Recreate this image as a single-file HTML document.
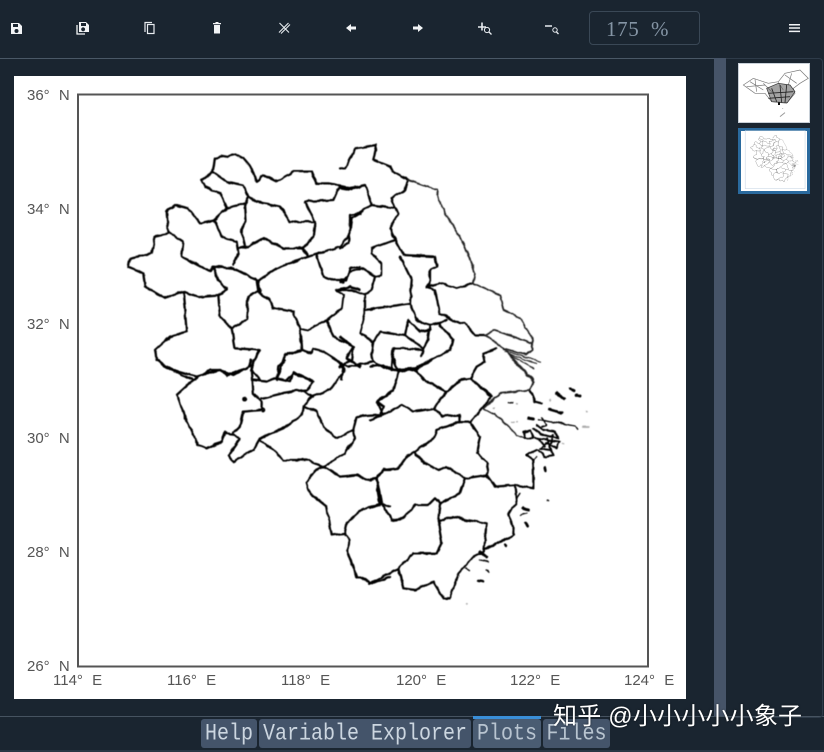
<!DOCTYPE html>
<html><head><meta charset="utf-8"><style>
html,body{margin:0;padding:0;background:#1a2530;}
#r{position:relative;width:824px;height:752px;overflow:hidden;background:#1a2530;}
.a{position:absolute;}
.tab{position:absolute;top:719px;height:29px;background:#44546a;border-radius:3px;color:#ccd6e0;font:20px/32px "Liberation Mono",monospace;text-align:center;white-space:pre;}
.tab span{display:inline-block;transform:scaleY(1.15);}
</style></head><body><div id="r">
<div class="a" style="left:0;top:58px;width:714px;height:1px;background:#4a5866"></div>
<div class="a" style="left:0;top:716px;width:824px;height:1px;background:#465360"></div>
<div class="a" style="left:0;top:750px;width:824px;height:2px;background:#2a3644"></div>
<div class="a" style="left:714px;top:58px;width:12px;height:658px;background:#465468"></div>
<div class="a" style="left:726px;top:58px;width:96px;height:658px;border:1px solid #2e3b49;border-left:0;border-radius:0 4px 4px 0"></div>
<div class="a" style="left:14px;top:76px;width:672px;height:623px;background:#fff"></div>
<svg class="a" style="left:0;top:0" width="824" height="58" fill="#f2f4f6" stroke="none">
<path d="M11 23h8l3 3v8h-11zM13 24v3h5v-3zM16.500 29a2 2 0 100 4 2 2 0 000-4z" fill-rule="evenodd"/>
<path d="M79 22h7l3 3v7h-10zM81 23v3h5v-3zM84 27.500a2 2 0 100 3.600 2 2 0 000-3.600z" fill-rule="evenodd"/>
<path d="M77 25v9h8" fill="none" stroke="#f2f4f6" stroke-width="1.300"/>
<g fill="none" stroke="#e8ecf0" stroke-width="1.200"><path d="M145 32v-9.500h7"/><rect x="147.500" y="24.500" width="6.500" height="9"/></g>
<path d="M214 25h6v8.500h-6zM213 23h8v1.300h-8zM215.500 22h3v1h-3z"/>
<g fill="none" stroke="#e8ecf0" stroke-width="1.100"><path d="M279.500 23l9.500 9.500M279 32.500l9.500-9.500M281 33.500l9-9"/></g>
<path d="M346 28l5-4v2.500h5v3h-5v2.500z"/>
<path d="M423 28l-5-4v2.500h-5v3h5v2.500z"/>
<g fill="none" stroke="#e8ecf0"><path d="M478 27h8M482 22.500v8" stroke-width="1.600"/><circle cx="487" cy="30" r="2.600" stroke-width="1"/><path d="M489 32l2.500 2.500" stroke-width="1.300"/></g>
<g fill="none" stroke="#e8ecf0"><path d="M545 26h7" stroke-width="1.500"/><circle cx="555" cy="30" r="2.200" stroke-width="1"/><path d="M556.500 32l2 2" stroke-width="1.300"/></g>
<path d="M789 24h11v1.500h-11zM789 27.300h11v1.500h-11zM789 30.600h11v1.500h-11z"/>
</svg>
<div class="a" style="left:589px;top:11px;width:109px;height:32px;border:1px solid #3a4856;border-radius:4px"></div>
<div class="a" style="left:606px;top:13px;color:#8595a5;font:21px/32px 'Liberation Serif',serif;letter-spacing:.6px;white-space:pre">175  %</div>

<svg class="a" style="left:0;top:0" width="824" height="752" fill="none">
<defs>
<filter id="j" x="-5%" y="-5%" width="110%" height="110%"><feTurbulence type="fractalNoise" baseFrequency="0.16" numOctaves="1" seed="4"/><feDisplacementMap in="SourceGraphic" scale="3.500" xChannelSelector="R" yChannelSelector="G"/><feGaussianBlur stdDeviation="0.4"/></filter>
<filter id="s"><feGaussianBlur stdDeviation="0.35"/></filter>
<g id="m" stroke="#000" stroke-linejoin="round" stroke-linecap="round" fill="none">
<g transform="translate(120 140) scale(.3333)" stroke-width="6.800">
<path d="M385 170L370 135 320 125 278 95 285 55 345 42 370 55 395 85 410 125 430 105 470 125 520 95 575 95 590 130 625 130 660 135 680 145 720 140"/>
<path d="M278 95L245 120 255 140 300 160 320 205 375 190 385 170 410 185 480 200 510 245 580 245"/>
<path d="M375 190L378 240 365 270 375 320 355 325"/>
<path d="M320 205L283 240 305 290 350 305 355 340 340 375"/>
<path d="M283 240L240 250 205 205 165 195 140 215 145 275 190 305 185 350 270 395 280 380 340 385 410 420 415 455"/>
<path d="M145 280L105 290 95 340 30 355 25 380 70 400 75 440 135 475 190 455 235 470 295 465 320 450 295 420 280 380"/>
<path d="M355 325L385 320 430 295 490 325 550 325 565 350 510 370 470 385 415 420 420 460 450 480 460 505 520 515 540 565 560 570 620 540 665 505 670 465 650 450 690 440 720 450"/>
<path d="M550 325L580 290 585 245 555 185 640 180 660 135"/>
<path d="M565 350L660 320 690 280 690 225 720 220"/>
<path d="M590 345L610 410 640 420 680 420 690 385 720 380"/>
<path d="M295 465L300 530 335 565 345 625 420 630 395 675 395 690 420 720"/>
<path d="M410 455L385 470 380 540 335 565"/>
<path d="M190 455L200 575 150 590 105 630 110 660 160 690 230 710 300 690 340 705 395 675"/>
<path d="M540 565L545 630 495 645 470 720"/>
<path d="M620 540L640 590 700 620 680 655 720 680"/>
<path d="M545 630L575 640 580 625 610 635 650 660 670 680 665 720"/>
<path d="M500 720L520 700 570 720"/>
</g>
<g transform="translate(340 140) scale(.3333)" stroke-width="6.800">
<path d="M0 85L15 85 45 25 110 15 100 60 150 80 160 95 205 120"/>
<path d="M205 120L195 150 155 175 165 205 95 195 75 135 20 150 0 140"/>
<path d="M95 195L35 235 25 310 0 325"/>
<path d="M165 205L175 220 150 265 165 300 95 325 95 340 125 370 125 405 105 410 65 385 30 395 10 425 0 425"/>
<path d="M165 300L190 345 285 350 290 380 270 390 270 430 260 440 300 430 350 445 400 430"/>
<path d="M180 350L215 420 210 490 235 545 270 555 265 600 250 625 245 650"/>
<path d="M260 440L285 450 300 520 345 545 375 550 405 585 435 585"/>
<path d="M235 545L270 555 300 550 320 540"/>
<path d="M105 410L95 450 75 465 35 450 0 450M75 465L75 520 60 580 100 605 95 640 100 665 25 680 0 670"/>
<path d="M75 510L210 490"/>
<path d="M100 605L120 575 195 585 205 540 240 575 270 570M195 585L250 625"/>
<path d="M155 690L160 625 200 625 245 630"/>
<path d="M100 665L130 680 155 690 225 685 330 630 340 600 300 555"/>
<path d="M225 685L250 720"/>
<path d="M0 590L40 620 35 660 0 680"/>
</g>
<g transform="translate(340 140) scale(.3333)" stroke-width="5.200" stroke="#222">
<path d="M205 120L290 150 300 190 375 320 405 400 400 430 480 465 490 510 540 535 575 590 578 630 560 645 490 625"/>
<path d="M435 585L460 570 520 590 575 610"/>
<path d="M435 585L490 625 580 720"/>
<path d="M490 630L600 665M495 637L590 672M510 645L580 685" stroke-width="3.500"/>
</g>
<g transform="translate(150 360) scale(.3333)" stroke-width="6.800">
<path d="M20 0L60 30 130 60 80 105 105 170 145 255 170 265 215 245 225 215 270 235 235 285 250 305 310 270 330 235 400 205 455 165 460 140 485 110 540 90 585 30 560 0"/>
<path d="M130 60L180 30 215 30 230 45 290 25 305 0"/>
<path d="M305 20L310 100 335 125 335 150 280 155 270 200 250 220"/>
<path d="M310 60L350 65 375 55 420 65 430 35 490 65 470 90 420 95 335 115"/>
<path d="M380 55L385 20 405 0M455 90L490 110"/>
<path d="M460 140L500 155 520 200 560 235 610 210 620 170 690 165 700 140 680 125 720 100"/>
<path d="M610 210L615 235 585 280 520 320 495 310 470 300 400 300 370 270 330 240"/>
<path d="M520 320L570 350 620 345 650 360 680 355 690 430 720 440"/>
<path d="M520 320L495 330 470 370 480 400 530 440 545 525 585 520 590 490 640 445 690 435"/>
<path d="M585 525L600 540 590 570 620 650 670 670 720 650"/>
<path d="M680 355L700 330 720 330"/>
<circle cx="283" cy="118" r="3"/><circle cx="340" cy="150" r="4"/>
</g>
<g transform="translate(370 360) scale(.3333)" stroke-width="6.800">
<path d="M0 180L40 165 95 135 130 155 195 145 215 170 270 165 270 185 300 185 335 145 365 110 300 55 320 20 345 5 340 -20 380 -35"/>
<path d="M135 30L170 65 230 95 200 130 195 145M230 95L270 60 300 55"/>
<path d="M135 30L85 35 70 0M85 35L70 90 20 125 40 165M0 20L40 15 85 35M135 30L185 0"/>
<path d="M480 90L495 125 515 130"/>
<path d="M300 185L330 230 320 280 355 310 350 345 375 380 435 375 490 385 490 300 470 285"/>
<path d="M270 185L200 210 190 235 135 275 110 290 85 325 40 330 20 355 35 430 65 480 100 475 135 435 175 435 195 415 210 430 270 400 285 355 350 345"/>
<path d="M135 280L165 310 205 330 230 320 285 355M20 355L0 360M35 430L0 445"/>
<path d="M210 430L205 480 215 550 200 580 130 580 85 625 0 670"/>
<path d="M85 625L100 685 135 690 190 665 220 715 240 715 265 640 310 590 340 575 350 490 290 480 250 470 220 480 205 480"/>
<path d="M340 570L380 550 435 525 415 460 440 430 435 375"/>
</g>
<g transform="translate(370 360) scale(.3333)" stroke-width="5.200" stroke="#222">
<path d="M340 145L390 100 480 90 490 65 430 0"/>
<path d="M340 145L385 170 440 225 465 235"/>
</g>
</g>
<g id="isl" transform="translate(370 360) scale(.3333)" stroke="#000" stroke-linecap="round" stroke-linejoin="round" fill="none">
<path stroke-width="9" d="M600 87L612 92M620 105L630 108M560 100L585 118M540 148L575 158M478 175L490 177M525 325L527 332M468 488L474 500M460 445L475 450M325 662L340 664M330 575L350 592M405 555L407 557"/>
<path stroke-width="4" d="M505 178L540 185 570 190 615 198 622 208M515 172L530 195 515 200"/>
<path stroke-width="6" d="M460 215L480 210 490 235 465 235zM490 205L520 225 565 235 555 215 520 210 500 195M495 235L570 245 560 265 530 250 510 265 540 270 550 285 525 290 505 270M530 235L545 275M510 240L525 260M550 225L540 260M470 285L500 270"/>
<path stroke-width="4" d="M532 422L536 422M440 410L450 400M450 465L470 460M350 630L355 637M415 128L430 125M330 600L355 605M285 625L300 632M490 300L500 290"/>
<g stroke="#aaa" stroke-width="5"><path d="M650 155L651 155M442 130L443 130M372 145L374 145M425 185L432 185M442 185L443 185M290 733L291 733M640 201L655 201M578 250L579 250M265 650L266 650M540 120L541 120"/></g>
</g>
</defs>
<use href="#m" filter="url(#j)"/>
<use href="#isl" filter="url(#j)"/>
<rect x="78" y="94.500" width="570" height="572" stroke="#555" stroke-width="2"/>
<g fill="#555" stroke="none" font-family="'Liberation Sans',sans-serif" font-size="15" style="white-space:pre;word-spacing:5px">
<text x="27" y="100">36° N</text><text x="27" y="214">34° N</text><text x="27" y="329">32° N</text><text x="27" y="443">30° N</text><text x="27" y="557">28° N</text><text x="27" y="671">26° N</text>
<text x="53" y="685">114° E</text><text x="167" y="685">116° E</text><text x="281" y="685">118° E</text><text x="396" y="685">120° E</text><text x="510" y="685">122° E</text><text x="624" y="685">124° E</text>
</g>

<rect x="738.500" y="63.500" width="71" height="59" fill="#fff" stroke="#c8d0d8"/>
<g transform="translate(700 50) scale(.3333)" filter="url(#s)" fill="none" stroke="#777" stroke-width="2">
<path d="M130 105L160 85 190 95 205 100 235 95 255 70 300 60 325 85 300 100 280 115 285 130 260 160 215 155 195 130 165 130 130 105z"/>
<path d="M150 95L190 120M165 88L170 125M190 100L215 125M140 110L195 105M255 75L290 100M275 70L265 105M235 97L250 120"/>
<path d="M200 115L235 100 270 105 285 125 262 158 215 155z" fill="#555" fill-opacity=".55" stroke="#333"/>
<path d="M205 130L280 125M215 115L230 155M240 105L245 158M260 105L255 158M205 145L270 140" stroke="#222" stroke-width="2.500"/>
<path d="M237 157L237 165" stroke="#111" stroke-width="6"/>
<path d="M240 200L255 188M248 175L248 177" stroke="#999" stroke-width="3"/>
</g>
<rect x="739.500" y="129.500" width="69" height="63" fill="#fff" stroke="#2a6a9e" stroke-width="3"/>
<g transform="translate(738.500 128.500) scale(.105 .102) translate(-14 -76)" opacity=".75"><use href="#m"/><use href="#isl"/><rect x="78" y="94" width="570" height="572" stroke="#bcd" stroke-width="6"/></g>
</svg>

<div class="tab" style="left:201px;width:56px"><span>Help</span></div>
<div class="tab" style="left:259px;width:212px"><span>Variable Explorer</span></div>
<div class="tab" style="left:473px;width:68px;background:#4a5c72;color:#b8c4d0"><span>Plots</span></div>
<div class="a" style="left:473px;top:716px;width:68px;height:3px;background:#3a8fd8"></div>
<div class="tab" style="left:543px;width:67px;color:#b8c4d0"><span>Files</span></div>
<div class="a" style="left:553px;top:702px;color:#fff;font:24px/30px 'Liberation Sans','Noto Sans CJK SC',sans-serif;white-space:pre;letter-spacing:.2px;text-shadow:0 0 2px rgba(0,0,0,.6)">知乎 @小小小小小象子</div>
</div></body></html>
